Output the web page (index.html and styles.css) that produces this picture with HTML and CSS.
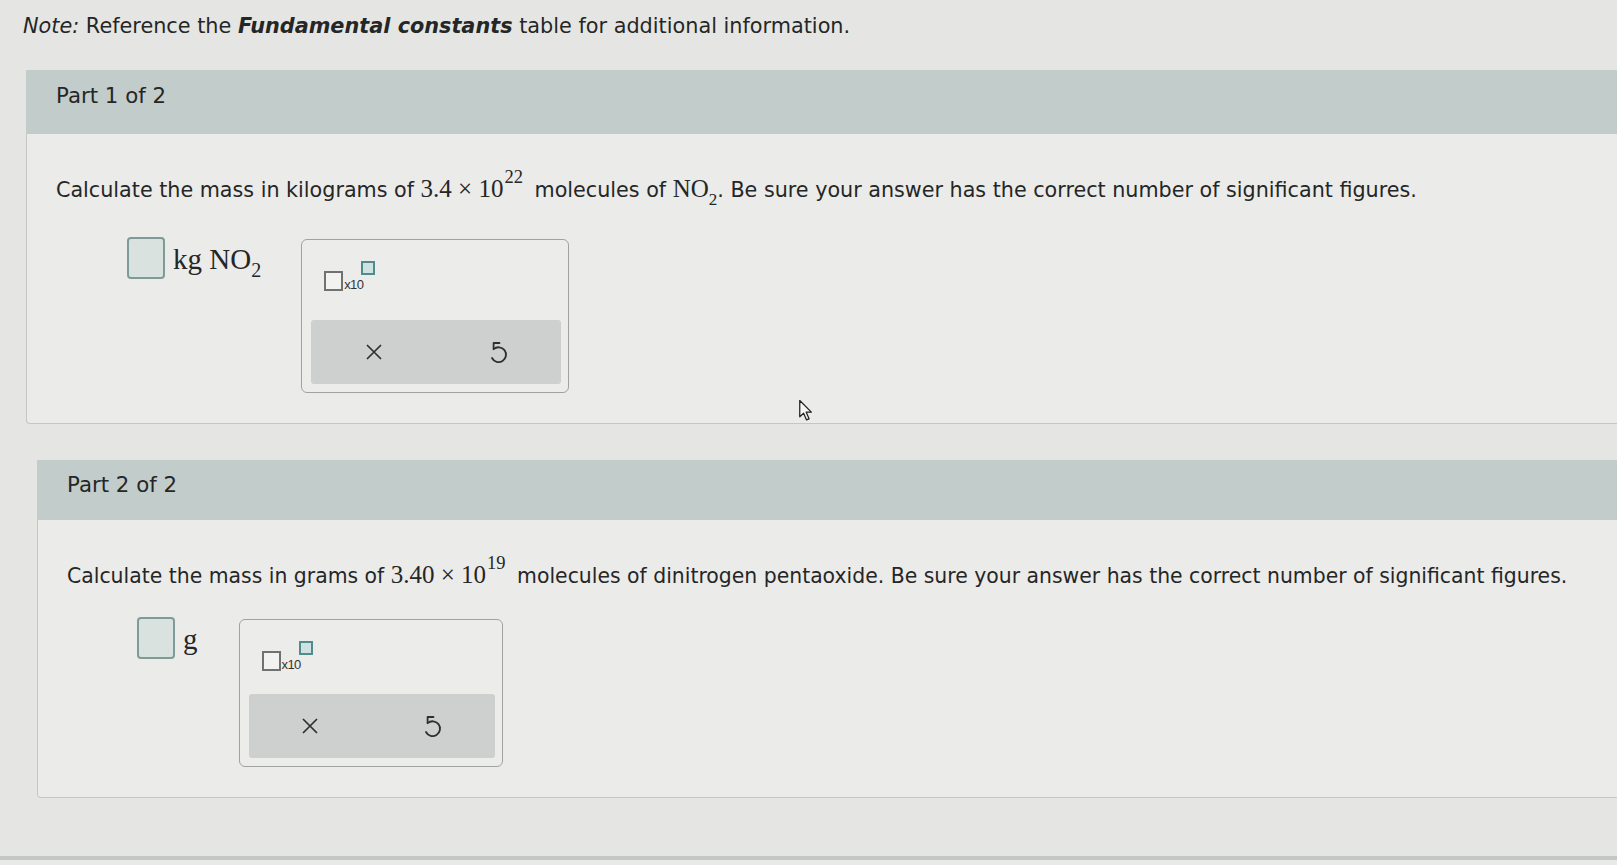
FILE: index.html
```html
<!DOCTYPE html>
<html lang="en">
<head>
<meta charset="utf-8">
<title>Part 1 of 2</title>
<link rel="stylesheet" href="styles.css">
</head>
<body>
<div class="page">
  <p class="note"><i>Note:</i> Reference the <b><i>Fundamental constants</i></b> table for additional information.</p>

  <section class="part">
    <div class="part-head">Part 1 of 2</div>
    <div class="part-body">
      <p class="question">Calculate the mass in kilograms of <span class="math">3.4 × 10<sup>22</sup></span> molecules of <span class="math">NO<sub>2</sub></span>. Be sure your answer has the correct number of significant figures.</p>
      <div class="answer-row">
        <div class="answer">
          <span class="input-box"></span>
          <span class="unit">kg NO<sub>2</sub></span>
        </div>
        <div class="toolbox">
          <div class="sci">
            <span class="sci-base"></span>
            <span class="sci-x">x10</span>
            <span class="sci-exp"></span>
          </div>
          <div class="tool-bar">
            <span class="tool-btn">
              <svg class="icon-x" viewBox="0 0 18 18"><path d="M2 2 L16 16 M16 2 L2 16"/></svg>
            </span>
            <span class="tool-btn">
              <svg class="icon-undo" viewBox="0 0 20 25"><path d="M10.5 3 H4.6 V8.8"/><path d="M4.6 9.2 A7.4 7.4 0 1 1 3 18"/></svg>
            </span>
          </div>
        </div>
      </div>
    </div>
  </section>

  <section class="part part-second">
    <div class="part-head">Part 2 of 2</div>
    <div class="part-body">
      <p class="question">Calculate the mass in grams of <span class="math">3.40 × 10<sup>19</sup></span> molecules of dinitrogen pentaoxide. Be sure your answer has the correct number of significant figures.</p>
      <div class="answer-row">
        <div class="answer">
          <span class="input-box"></span>
          <span class="unit">g</span>
        </div>
        <div class="toolbox">
          <div class="sci">
            <span class="sci-base"></span>
            <span class="sci-x">x10</span>
            <span class="sci-exp"></span>
          </div>
          <div class="tool-bar">
            <span class="tool-btn">
              <svg class="icon-x" viewBox="0 0 18 18"><path d="M2 2 L16 16 M16 2 L2 16"/></svg>
            </span>
            <span class="tool-btn">
              <svg class="icon-undo" viewBox="0 0 20 25"><path d="M10.5 3 H4.6 V8.8"/><path d="M4.6 9.2 A7.4 7.4 0 1 1 3 18"/></svg>
            </span>
          </div>
        </div>
      </div>
    </div>
  </section>

  <div class="footer"></div>

  <svg class="cursor" viewBox="0 0 14 22"><path d="M1.5 1.5 L1.5 17 L5.2 13.6 L8 20 L10.4 19 L7.7 12.6 L12.6 12.6 Z"/></svg>
</div>
</body>
</html>
```

FILE: styles.css
```css
html, body {
  margin: 0;
  padding: 0;
}

body {
  background: #e5e6e4;
  font-family: "DejaVu Sans", Verdana, sans-serif;
  color: #252626;
  overflow: hidden;
}

.page {
  position: relative;
  height: 865px;
  display: flex;
  flex-direction: column;
}

.note {
  margin: 0;
  padding: 14px 0 0 23px;
  font-size: 20.8px;
  line-height: 24px;
}

.part {
  margin: 32px -30px 0 26px;
}

.part-head {
  height: 64px;
  box-sizing: border-box;
  padding: 14px 0 0 30px;
  background: #c2cccb;
  font-size: 21.3px;
  line-height: 24px;
}

.part-body {
  background: #ebebea;
  border: 1px solid #c5c7c5;
  border-top: none;
  border-radius: 0 0 0 4px;
  padding: 42px 0 30px 29px;
}

.question {
  margin: 0;
  font-size: 20.7px;
  line-height: 26px;
  white-space: nowrap;
}

.math {
  font-family: "Liberation Serif", "Times New Roman", serif;
  font-size: 25px;
}

.math sup {
  font-size: 18.5px;
  line-height: 0;
  vertical-align: 14px;
  margin-left: 1px;
  margin-right: 5px;
}

.math sub {
  font-size: 17px;
  line-height: 0;
  vertical-align: -8px;
}

.answer-row {
  display: flex;
  align-items: flex-start;
  margin-top: 34px;
  padding-left: 71px;
}

.answer {
  display: flex;
  align-items: flex-start;
}

.input-box {
  width: 38px;
  height: 42px;
  box-sizing: border-box;
  border: 2px solid #7f9b98;
  border-radius: 4px;
  background: #dae2e0;
}

.unit {
  margin-left: 8px;
  padding-top: 5px;
  font-family: "Liberation Serif", "Times New Roman", serif;
  font-size: 29px;
  line-height: 34px;
}

.unit sub {
  font-size: 20px;
  line-height: 0;
  vertical-align: -8px;
}

.toolbox {
  margin-left: 40px;
  margin-top: 2px;
  width: 268px;
  height: 154px;
  box-sizing: border-box;
  border: 1px solid #a0a2a1;
  border-radius: 6px;
  background: #ececeb;
  padding: 21px 7px 8px 9px;
  display: flex;
  flex-direction: column;
}

.sci {
  display: flex;
  align-items: flex-start;
  margin-left: 13px;
  height: 30px;
}

.sci-base {
  width: 19px;
  height: 20px;
  box-sizing: border-box;
  margin-top: 10px;
  border: 2px solid #6f7271;
  background: #f2f2f1;
}

.sci-x {
  margin-top: 17px;
  margin-left: 1px;
  font-family: "Liberation Sans", Arial, sans-serif;
  font-size: 13px;
  line-height: 13px;
  color: #333;
  letter-spacing: -0.6px;
}

.sci-exp {
  width: 14px;
  height: 14px;
  box-sizing: border-box;
  margin-left: -2px;
  border: 2px solid #4f8c8b;
  background: #cfe2e1;
}

.tool-bar {
  margin-top: auto;
  height: 64px;
  border-radius: 3px;
  background: #cdd0cf;
  display: flex;
}

.tool-btn {
  flex: 1;
  display: flex;
  align-items: center;
  justify-content: center;
}

.icon-x {
  width: 18px;
  height: 18px;
  fill: none;
  stroke: #2e3030;
  stroke-width: 1.7;
}

.icon-undo {
  width: 20px;
  height: 25px;
  fill: none;
  stroke: #2e3030;
  stroke-width: 1.8;
  stroke-linecap: round;
  stroke-linejoin: round;
}

/* second part is rendered slightly smaller in the reference */
.part-second {
  margin-top: 36px;
  margin-left: 37px;
}

.part-second .part-head {
  height: 60px;
  padding-top: 13px;
}

.part-second .question {
  font-size: 20.4px;
}

.part-second .answer-row {
  margin-top: 28px;
  padding-left: 70px;
}

.part-second .toolbox {
  margin-left: 41px;
  width: 264px;
  height: 148px;
}

.footer {
  margin-top: auto;
  height: 5px;
  border-top: 4px solid #c3c7c5;
  background: #e9eae8;
}

.cursor {
  position: absolute;
  left: 798px;
  top: 399px;
  width: 15px;
  height: 23px;
  fill: #f7f7f7;
  stroke: #222;
  stroke-width: 1.2;
  stroke-linejoin: round;
}
```
